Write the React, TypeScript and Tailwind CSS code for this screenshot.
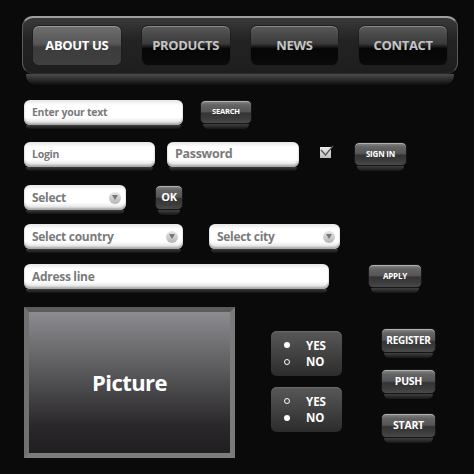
import React from "react";

const F = "font-['Open_Sans','Liberation_Sans',sans-serif]";

function Reflect({ cls = "" }: { cls?: string }) {
  return <div className={"mx-[3px] h-[5px] rounded-b-[6px] bg-[linear-gradient(to_bottom,#404040,#161616)] " + cls} />;
}

function Gloss({ label, w, h = "h-[24px]", text = "text-[8px]" }: { label: string; w: string; h?: string; text?: string }) {
  return (
    <div className={"flex flex-col " + w}>
      <div
        className={
          h +
          " flex items-center justify-center rounded-[5px] border border-[#161616] bg-[linear-gradient(to_bottom,#8a8a8a_0%,#646464_18%,#555_48%,#343434_55%,#3c3c3c_80%,#4a4a4a_100%)] shadow-[inset_0_1px_0_#b0b0b0] font-bold text-white tracking-tight " +
          text
        }
      >
        {label}
      </div>
      <Reflect />
    </div>
  );
}

function Field({ label, w, text = "text-[11px]", select = false }: { label: string; w: string; text?: string; select?: boolean }) {
  return (
    <div className={"flex flex-col " + w}>
      <div className="flex h-[25px] items-center justify-between rounded-[6px] bg-[linear-gradient(to_bottom,#e6e6e6_0%,#ffffff_20%,#ffffff_70%,#d8d8d8_100%)] pl-[8px] pr-[5px] shadow-[inset_0_-2px_2px_#a8a8a8]">
        <span className={"font-bold text-[#7a7a7a] tracking-tight " + text}>{label}</span>
        {select && (
          <span className="flex h-[12px] w-[12px] items-center justify-center rounded-full bg-[linear-gradient(to_bottom,#e8e8e8,#b4b4b4)]">
            <svg width="6" height="5" viewBox="0 0 6 5">
              <path d="M0 0 L6 0 L3 5 Z" fill="#777" />
            </svg>
          </span>
        )}
      </div>
      <div className="mx-[2px] h-[4px] rounded-b-[6px] bg-[linear-gradient(to_bottom,#3c3c3c,#121212)]" />
    </div>
  );
}

function NavItem({ label, active }: { label: string; active?: boolean }) {
  return (
    <div
      className={
        "flex h-[41px] w-[90px] items-center justify-center rounded-[7px] border font-bold text-[13px] tracking-tight " +
        (active
          ? "border-[#1e1e1e] bg-[linear-gradient(to_bottom,#6e6e6e_0%,#575757_45%,#3c3c3c_55%,#404040_100%)] text-white shadow-[inset_0_1px_0_#9a9a9a]"
          : "border-[#1e1e1e] bg-[linear-gradient(to_bottom,#595959_0%,#3a3a3a_45%,#060606_58%,#0a0a0a_100%)] text-[#c4c4c4] shadow-[inset_0_1px_0_#888]")
      }
    >
      {label}
    </div>
  );
}

function Radio({ first }: { first: boolean }) {
  const dot = (filled: boolean) =>
    filled ? (
      <span className="h-[6px] w-[6px] rounded-full bg-white" />
    ) : (
      <span className="h-[6px] w-[6px] rounded-full border-[1.5px] border-white" />
    );
  return (
    <div className="flex h-[45px] w-[71px] flex-col justify-center gap-[5px] rounded-[6px] bg-[linear-gradient(to_bottom,#585858_0%,#424242_50%,#2c2c2c_100%)] pl-[13px] shadow-[inset_0_1px_0_#6a6a6a]">
      <div className="flex items-center gap-[16px]">
        {dot(first)}
        <span className="text-[11.5px] font-bold leading-none text-white">YES</span>
      </div>
      <div className="flex items-center gap-[16px]">
        {dot(!first)}
        <span className="text-[11.5px] font-bold leading-none text-white">NO</span>
      </div>
    </div>
  );
}

export default function App() {
  return (
    <div className={"h-[474px] w-[474px] overflow-hidden bg-[#0a0a0a] " + F}>
      {/* nav */}
      <div className="ml-[22px] mt-[16px] flex w-[436px] flex-col">
        <div className="flex h-[58px] items-center gap-[19px] rounded-[11px] border-t-2 border-x border-b border-t-[#a0a0a0] border-x-[#5a5a5a] border-b-[#2a2a2a] bg-[linear-gradient(to_bottom,#3a3a3a,#232323_40%,#1e1e1e)] px-[9px]">
          <NavItem label="ABOUT US" active />
          <NavItem label="PRODUCTS" />
          <NavItem label="NEWS" />
          <NavItem label="CONTACT" />
        </div>
        <div className="mx-[4px] h-[11px] rounded-b-[10px] bg-[linear-gradient(to_bottom,#4a4a4a,#262626_60%,#0e0e0e)]" />
      </div>

      {/* row 1 */}
      <div className="ml-[24px] mt-[15px] flex items-start">
        <Field label="Enter your text" w="w-[159px]" text="text-[10.5px]" />
        <div className="ml-[17px]">
          <Gloss label="SEARCH" w="w-[52px]" text="text-[7.5px]" />
        </div>
      </div>

      {/* row 2 */}
      <div className="ml-[24px] mt-[13px] flex items-start">
        <Field label="Login" w="w-[131px]" text="text-[10.5px]" />
        <div className="ml-[12px]">
          <Field label="Password" w="w-[132px]" text="text-[12.5px]" />
        </div>
        <div className="relative ml-[21px] mt-[5px] h-[11px] w-[11px] bg-[linear-gradient(to_bottom,#ececec,#bcbcbc)]">
          <svg className="absolute left-0 top-[-2px]" width="14" height="13" viewBox="0 0 14 13">
            <path d="M1 5 L5.5 10 L13 1" stroke="#555" strokeWidth="1.3" fill="none" />
          </svg>
        </div>
        <div className="ml-[23px]">
          <Gloss label="SIGN IN" w="w-[53px]" text="text-[8px]" />
        </div>
      </div>

      {/* row 3 */}
      <div className="ml-[24px] mt-[14px] flex items-start">
        <Field label="Select" w="w-[102px]" text="text-[12px]" select />
        <div className="ml-[29px]">
          <Gloss label="OK" w="w-[28px]" h="h-[25px]" text="text-[11px]" />
        </div>
      </div>

      {/* row 4 */}
      <div className="ml-[24px] mt-[9px] flex items-start">
        <Field label="Select country" w="w-[159px]" text="text-[12px]" select />
        <div className="ml-[26px]">
          <Field label="Select city" w="w-[131px]" text="text-[12px]" select />
        </div>
      </div>

      {/* row 5 */}
      <div className="ml-[24px] mt-[11px] flex items-start">
        <Field label="Adress line" w="w-[305px]" text="text-[12px]" />
        <div className="ml-[39px]">
          <Gloss label="APPLY" w="w-[54px]" text="text-[8px]" />
        </div>
      </div>

      {/* bottom */}
      <div className="ml-[24px] mt-[14px] flex items-start">
        <div className="h-[151px] w-[211px] border-[5px] border-t-[#5c5c5c] border-l-[#717171] border-r-[#7a7a7a] border-b-[#7c7c7c] bg-[#6a6a6a]">
          <div className="flex h-full w-full items-center justify-center bg-[linear-gradient(to_bottom,#8c8c90_0%,#5c5b5e_40%,#2a282a_80%,#201e20_100%)]">
            <span className="text-[22px] font-bold tracking-tight text-white">Picture</span>
          </div>
        </div>
        <div className="ml-[36px] mt-[24px] flex flex-col gap-[11px]">
          <Radio first />
          <Radio first={false} />
        </div>
        <div className="ml-[39px] mt-[21px] flex flex-col gap-[11px]">
          <Gloss label="REGISTER" w="w-[55px]" h="h-[25px]" text="text-[10px]" />
          <Gloss label="PUSH" w="w-[55px]" h="h-[25px]" text="text-[10.5px]" />
          <div className="mt-[3px]">
            <Gloss label="START" w="w-[55px]" h="h-[25px]" text="text-[10.5px]" />
          </div>
        </div>
      </div>
    </div>
  );
}
